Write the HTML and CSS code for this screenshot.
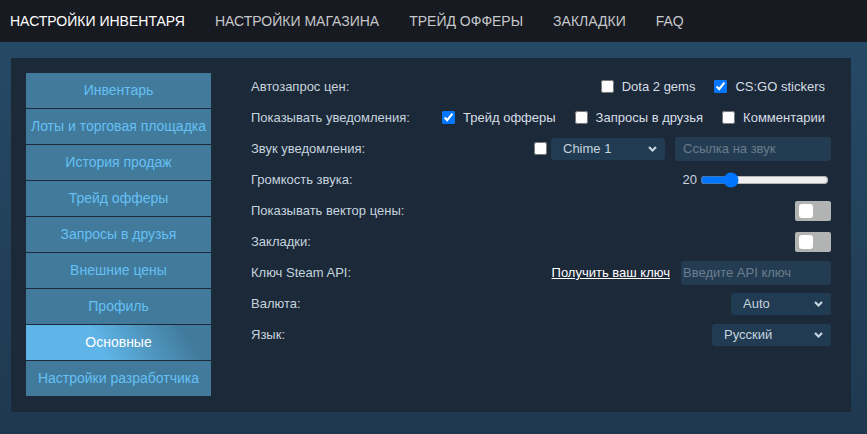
FILE: index.html
```html
<!DOCTYPE html>
<html lang="ru">
<head>
    <meta charset="UTF-8">
    <meta name="viewport" content="width=device-width, initial-scale=1.0">
    <title>Настройки инвентаря</title>
    <link rel="stylesheet" href="styles.css">
</head>
<body>
    <div class="top-nav">
        <a href="#" class="nav-link active">Настройки инвентаря</a>
        <a href="#" class="nav-link">Настройки магазина</a>
        <a href="#" class="nav-link">Трейд офферы</a>
        <a href="#" class="nav-link">Закладки</a>
        <a href="#" class="nav-link">FAQ</a>
    </div>

    <div class="settings-panel">
        <div class="side-menu">
            <a href="#" class="menu-item">Инвентарь</a>
            <a href="#" class="menu-item">Лоты и торговая площадка</a>
            <a href="#" class="menu-item">История продаж</a>
            <a href="#" class="menu-item">Трейд офферы</a>
            <a href="#" class="menu-item">Запросы в друзья</a>
            <a href="#" class="menu-item">Внешние цены</a>
            <a href="#" class="menu-item">Профиль</a>
            <a href="#" class="menu-item active">Основные</a>
            <a href="#" class="menu-item">Настройки разработчика</a>
        </div>

        <div class="settings">
            <div class="row">
                <span class="row-label">Автозапрос цен:</span>
                <div class="check-list">
                    <label class="check"><input type="checkbox">Dota 2 gems</label>
                    <label class="check"><input type="checkbox" checked>CS:GO stickers</label>
                </div>
            </div>
            <div class="row">
                <span class="row-label">Показывать уведомления:</span>
                <div class="check-list">
                    <label class="check"><input type="checkbox" checked>Трейд офферы</label>
                    <label class="check"><input type="checkbox">Запросы в друзья</label>
                    <label class="check"><input type="checkbox">Комментарии</label>
                </div>
            </div>
            <div class="row">
                <span class="row-label">Звук уведомления:</span>
                <div class="controls">
                    <input type="checkbox" class="sound-check">
                    <div class="select-wrap sound-select">
                        <select>
                            <option>Chime 1</option>
                            <option>Chime 2</option>
                        </select>
                        <svg class="chevron" width="9" height="6" viewBox="0 0 9 6"><path d="M1 1l3.5 3.5L8 1" fill="none" stroke="#c6d4df" stroke-width="2.2"/></svg>
                    </div>
                    <input type="text" class="text-input sound-url" placeholder="Ссылка на звук">
                </div>
            </div>
            <div class="row">
                <span class="row-label">Громкость звука:</span>
                <div class="controls">
                    <span class="volume-value">20</span>
                    <input type="range" min="0" max="100" value="20">
                </div>
            </div>
            <div class="row">
                <span class="row-label">Показывать вектор цены:</span>
                <span class="toggle"><span class="knob"></span></span>
            </div>
            <div class="row">
                <span class="row-label">Закладки:</span>
                <span class="toggle"><span class="knob"></span></span>
            </div>
            <div class="row">
                <span class="row-label">Ключ Steam API:</span>
                <div class="controls">
                    <a href="#" class="key-link">Получить ваш ключ</a>
                    <input type="text" class="text-input api-key" placeholder="Введите API ключ">
                </div>
            </div>
            <div class="row">
                <span class="row-label">Валюта:</span>
                <div class="select-wrap currency-select">
                    <select>
                        <option>Auto</option>
                        <option>USD</option>
                    </select>
                    <svg class="chevron" width="9" height="6" viewBox="0 0 9 6"><path d="M1 1l3.5 3.5L8 1" fill="none" stroke="#c6d4df" stroke-width="2.2"/></svg>
                </div>
            </div>
            <div class="row">
                <span class="row-label">Язык:</span>
                <div class="select-wrap lang-select">
                    <select>
                        <option>Русский</option>
                        <option>English</option>
                    </select>
                    <svg class="chevron" width="9" height="6" viewBox="0 0 9 6"><path d="M1 1l3.5 3.5L8 1" fill="none" stroke="#c6d4df" stroke-width="2.2"/></svg>
                </div>
            </div>
        </div>
    </div>
</body>
</html>
```

FILE: styles.css
```css
body {
    font-family: 'Liberation Sans', Arial, sans-serif;
    background: linear-gradient(#264b68, #1f3850) no-repeat;
    background-color: #1f3850;
    min-height: 100vh;
    margin: 0;
    padding: 0;
    overflow: hidden;
}
.top-nav {
    background-color: #171a21;
    height: 42px;
    display: flex;
    align-items: center;
    gap: 30px;
    padding-left: 10px;
}
.nav-link {
    color: #c5c7c9;
    font-size: 14px;
    text-transform: uppercase;
    text-decoration: none;
}
.nav-link.active {
    color: #fff;
}
.settings-panel {
    background-color: #1c2939;
    margin: 16px 16px 0 11px;
    padding: 13px 20px 16px 15px;
    display: flex;
    align-items: flex-start;
}
.side-menu {
    width: 185px;
    margin-top: 2px;
    display: flex;
    flex-direction: column;
    gap: 1px;
    flex-shrink: 0;
}
.menu-item {
    height: 35px;
    line-height: 35px;
    background-color: #417a9b;
    color: #66c0f4;
    font-size: 14px;
    text-align: center;
    text-decoration: none;
    white-space: nowrap;
}
.menu-item.active {
    background: linear-gradient(60deg, #5fb5e7 40%, #417a9b 86%);
    color: #fff;
}
.settings {
    flex: 1;
    margin-left: 40px;
}
.row {
    height: 31px;
    display: flex;
    align-items: center;
    justify-content: space-between;
    font-size: 13px;
}
.row-label {
    color: #c6d4df;
}
.check-list {
    display: flex;
    align-items: center;
    gap: 19px;
    padding-right: 6px;
}
.check {
    display: flex;
    align-items: center;
    gap: 8px;
    color: #d6dee5;
}
input[type="checkbox"] {
    width: 13px;
    height: 13px;
    margin: 0;
}
.controls {
    display: flex;
    align-items: center;
}
.sound-check {
    margin-right: 4px !important;
}
.select-wrap {
    position: relative;
    height: 22px;
}
.select-wrap select {
    appearance: none;
    width: 100%;
    height: 100%;
    border: none;
    border-radius: 3px;
    background-color: #213b52;
    color: #c6d4df;
    font-family: inherit;
    font-size: 13px;
    padding: 0 0 0 12px;
    outline: none;
}
.chevron {
    position: absolute;
    right: 8px;
    top: 8px;
    pointer-events: none;
}
.sound-select {
    width: 114px;
}
.currency-select {
    width: 100px;
}
.lang-select {
    width: 119px;
}
.text-input {
    height: 24px;
    border: none;
    border-radius: 3px;
    background-color: #243c52;
    color: #c6d4df;
    font-family: inherit;
    font-size: 13px;
    box-sizing: border-box;
    outline: none;
}
.text-input::placeholder {
    color: #6a7c8b;
}
.sound-url {
    width: 156px;
    margin-left: 10px;
    padding: 0 8px;
}
.api-key {
    width: 150px;
    margin-left: 11px;
    padding: 0 2px;
}
.volume-value {
    color: #c6d4df;
    margin-right: 1px;
}
.toggle {
    width: 36px;
    height: 20px;
    border-radius: 2px;
    background-color: #b1b4b3;
    display: flex;
    align-items: center;
    padding-left: 4px;
    box-sizing: border-box;
}
.knob {
    width: 14px;
    height: 14px;
    border-radius: 3px;
    background-color: #fff;
}
.key-link {
    color: #fff;
    text-decoration: underline;
}
```
